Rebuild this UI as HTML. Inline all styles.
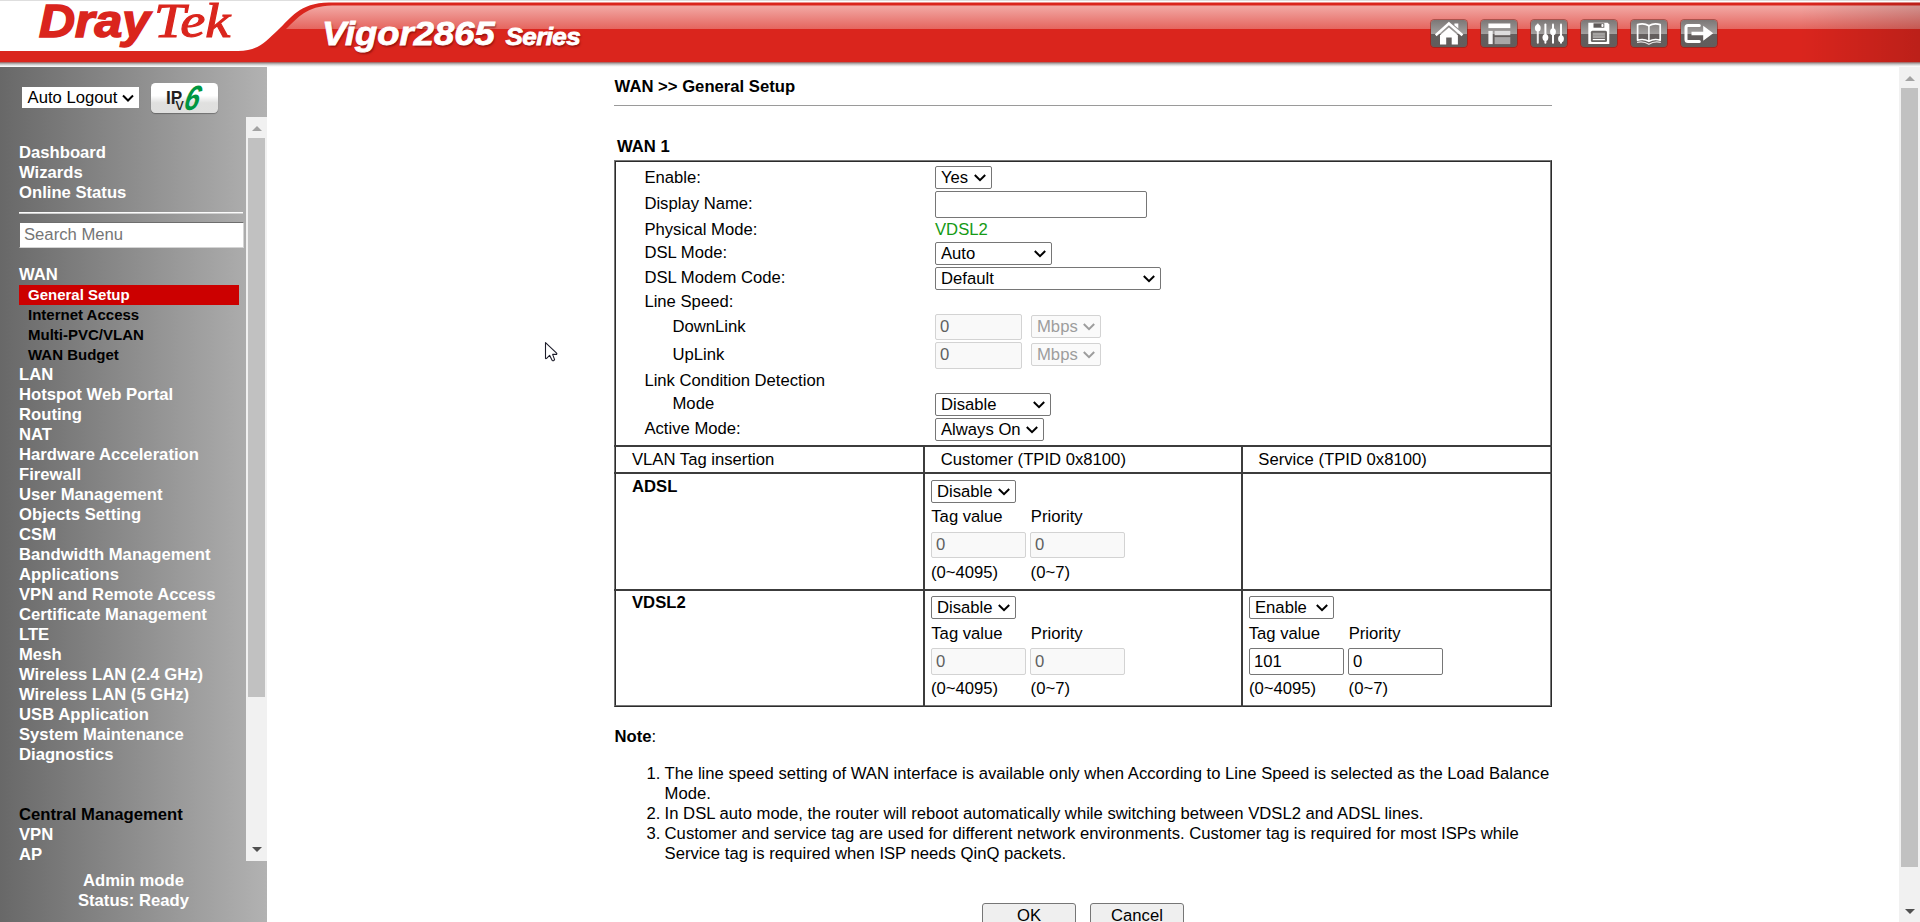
<!DOCTYPE html>
<html lang="en">
<head>
<meta charset="utf-8">
<title>Vigor2865 Series</title>
<style>
*{box-sizing:border-box}
html,body{margin:0;padding:0;width:1920px;height:922px;overflow:hidden;background:#fff;
  font-family:"Liberation Sans",Arial,sans-serif;font-size:16.67px;color:#000}
/* ---------- header ---------- */
#hdr{position:absolute;left:0;top:0;width:1920px;height:67px;overflow:hidden;background:#fff}
#hdr>svg{position:absolute;left:0;top:0}
.logo1{position:absolute;left:39px;top:-7px;font:italic bold 46px/56px "Liberation Sans",sans-serif;color:#da251d;
  transform-origin:0 0;transform:scaleX(1.085);white-space:nowrap;-webkit-text-stroke:1.600px #da251d}
.logo2{position:absolute;left:153.500px;top:-6.700px;font:italic 49px/56px "Liberation Serif",serif;color:#da251d;
  transform-origin:0 0;transform:scaleX(1.15);white-space:nowrap;-webkit-text-stroke:1.100px #da251d}
.model{position:absolute;left:322px;top:14.700px;font:italic bold 33.500px/38px "Liberation Sans",sans-serif;color:#fff;
  text-shadow:1px 2px 2px rgba(90,0,0,.55);white-space:nowrap;transform-origin:0 0;transform:scaleX(1.087);-webkit-text-stroke:.800px #fff}
.model small{font-size:24px;margin-left:10px;letter-spacing:-.600px}
.tb{position:absolute;top:20px;width:36.500px;height:26.500px;border-radius:3.500px;
  background:linear-gradient(#7b7776 0,#a29f9e 50%,#635e5d 52%,#625d5c 100%);
  box-shadow:0 0 0 1px rgba(110,35,30,.5)}
.tb svg{position:absolute;left:0;top:0}
/* ---------- sidebar ---------- */
#sb{position:absolute;left:0;top:67px;width:267px;height:855px;color:#fff;font-weight:bold}
#sbtop{position:absolute;left:0;top:0;width:267px;height:50px;background:linear-gradient(90deg,#686868,#b2b2b2)}
#sbmenu{position:absolute;left:0;top:50px;width:267px;height:744px;background:linear-gradient(90deg,#686868,#b2b2b2)}
#sbstat{position:absolute;left:0;top:794px;width:267px;height:61px;background:linear-gradient(90deg,#686868,#b2b2b2);
  text-align:center;line-height:20px;padding-top:10px}
#sb .m{position:absolute;left:19px;white-space:nowrap;line-height:20px;height:20px}
#sb .s{position:absolute;left:28px;white-space:nowrap;line-height:20px;height:20px;color:#000;font-size:15px}
#sb .k{color:#000}
#sb .sel{position:absolute;left:19px;top:218px;width:220px;height:20px;background:#cc0000;color:#fff;font-size:15px;line-height:20px;padding-left:9px}
#sb hr{position:absolute;left:19px;top:145px;width:224px;height:2px;border:0;border-top:1px solid #fbfbfb;border-bottom:1px solid #cfcfcf;margin:0}
#srch{position:absolute;left:19px;top:155px;width:225px;height:26px;background:#fff;border:1px solid #777;border-color:#6e6e6e #d4d4d4 #d4d4d4 #6e6e6e;border-radius:0;
  color:#757575;font-weight:normal;line-height:23px;padding-left:4px;font-size:16.67px}
#alog{position:absolute;left:21.600px;top:19.500px;width:117.700px;height:21.600px;background:#fff;color:#000;font-weight:normal;font-size:16.67px;line-height:22px;padding-left:6px;white-space:nowrap}
#alog svg{position:absolute;right:5px;top:7px}
#ipv6{position:absolute;left:151px;top:16px;width:67px;height:30px;border-radius:4.500px;
  background:linear-gradient(#fff 0,#fff 42%,#e0e0df 66%,#dfdfde 100%);box-shadow:0 1px 1px rgba(0,0,0,.3);color:#231f20}
#ipv6 span{position:absolute;white-space:nowrap}
.sbar{position:absolute;background:#f1f1f1}
.sbar i{position:absolute;background:#c1c1c1;display:block}
.sbar b{position:absolute;width:0;height:0;border-left:5px solid transparent;border-right:5px solid transparent;display:block}

/* ---------- main ---------- */
#main{position:absolute;left:267px;top:67px;width:1653px;height:855px;background:#fff;overflow:hidden}
#pg{position:absolute;left:-267px;top:-67px;width:1920px;height:922px}
#pg .t{position:absolute;white-space:nowrap;line-height:20px;height:20px}
#pg .b{font-weight:bold}
#pg .ln{position:absolute;background:#3c3c3c}
.sel2{position:absolute;height:23px}
.sel2 select{-webkit-appearance:none;appearance:none;display:block;width:100%;height:100%;margin:0;border:1px solid #767676;border-radius:2px;background:#fff;
  font:16.67px/20px "Liberation Sans",Arial,sans-serif;color:#000;padding:1px 0 0 5px;outline:0}
.sel2 svg{position:absolute;right:6px;top:8px;pointer-events:none}
.sel2.dis select{color:#9d9d9d;border-color:#d3d3d3;background:#fafafa;opacity:1}
.inp{position:absolute;height:26px;margin:0;border:1px solid #767676;border-radius:2px;background:#fff;
  font:16.67px/22px "Liberation Sans",Arial,sans-serif;color:#000;padding:0 0 0 4px;outline:0}
.inp.dis{color:#606060;border-color:#d3d3d3;background:#f9f9f9}
.btn{position:absolute;top:903px;height:28px;width:94px;margin:0;border:1px solid #767676;border-radius:3px;background:#efefef;
  font:16.67px/20px "Liberation Sans",Arial,sans-serif;color:#000;text-align:center;padding:2px 0 0 0}
#note{position:absolute;left:664.600px;top:763.700px;width:890px;margin:0;padding:0;list-style:none;line-height:20px}
#note li{position:relative;margin:0;padding:0}
#note li span{position:absolute;left:-18px;top:0}
</style>
</head>
<body>
<div id="hdr">
<svg width="1920" height="67" viewBox="0 0 1920 67">
 <defs>
  <linearGradient id="gl" x1="0" y1="0" x2="0" y2="1"><stop offset="0" stop-color="#f2aaa6"/><stop offset="1" stop-color="#e5655e"/></linearGradient>
  <linearGradient id="sh" x1="0" y1="0" x2="0" y2="1"><stop offset="0" stop-color="#7a1511" stop-opacity=".75"/><stop offset=".35" stop-color="#777" stop-opacity=".55"/><stop offset="1" stop-color="#bbb" stop-opacity="0"/></linearGradient>
  <linearGradient id="dk" x1="0" y1="0" x2="1" y2="0"><stop offset="0" stop-color="#000" stop-opacity="0"/><stop offset="1" stop-color="#000" stop-opacity=".14"/></linearGradient>
 </defs>
 <rect x="0" y="0" width="1920" height="1" fill="#dedede"/>
 <path d="M0,51 L238,51 C258,51 265,42 278,30 C291,18 299,3 329,2.5 L1920,2.5 L1920,62 L0,62 Z" fill="#da251d"/>
 <path d="M286,29 C298,18 306,6 332,5.5 L1920,5.5 L1920,29 Z" fill="url(#gl)"/>
 <rect x="1800" y="2.500" width="120" height="59.500" fill="url(#dk)"/>
 <rect x="0" y="62" width="1920" height="5" fill="url(#sh)"/>
</svg>
<div class="logo1">Dray</div>
<div class="logo2">Tek</div>
<div class="model">Vigor2865<small>Series</small></div>
<div class="tb" style="left:1430.500px"><svg width="37" height="27" viewBox="0 0 37 27"><path d="M17.900,1.700 L32.300,14.300 L30.600,16.200 L17.900,5.200 L5.600,16.200 L3.900,14.300 Z M23.400,3.500 H27.300 V8.500 L23.400,5.200 Z M9,15.300 L17.900,7.500 L26.900,15.300 V24.600 H20.700 V17.500 H15.200 V24.600 H9 Z" fill="#fff"/></svg></div>
<div class="tb" style="left:1480.500px"><svg width="37" height="27" viewBox="0 0 37 27"><rect x="7.400" y="3.500" width="21.900" height="4.600" fill="#fff"/><rect x="7.400" y="10.900" width="4.300" height="13.200" fill="#f4f4f4"/><rect x="13.600" y="10.900" width="15.700" height="4.300" fill="#dedddd"/><rect x="13.600" y="17.100" width="15.700" height="7" fill="#a9a7a7"/></svg></div>
<div class="tb" style="left:1530.500px"><svg width="37" height="27" viewBox="0 0 37 27"><g fill="#fff"><rect x="5.800" y="3.500" width="2" height="20.300" rx="1" opacity=".9"/><rect x="13.400" y="3.500" width="2" height="20.300" rx="1"/><rect x="21" y="3.500" width="2" height="20.300" rx="1"/><rect x="29" y="3.500" width="2" height="20.300" rx="1"/><ellipse cx="6.800" cy="8.100" rx="2.900" ry="3.500"/><ellipse cx="14.400" cy="17.500" rx="2.900" ry="3.500"/><ellipse cx="22" cy="11.700" rx="2.900" ry="3.500"/><ellipse cx="30" cy="18.700" rx="2.900" ry="3.500"/></g></svg></div>
<div class="tb" style="left:1580.500px"><svg width="37" height="27" viewBox="0 0 37 27"><path d="M7.300,2.700 H26.600 L28.300,4.400 V24 H7.300 Z" fill="#fff"/><rect x="12.500" y="3.300" width="10.800" height="4.400" fill="#5f5a59"/><rect x="20.400" y="4" width="2.100" height="3" rx=".800" fill="#fff"/><rect x="9.900" y="10.800" width="16.100" height="11.200" rx="1.500" fill="#6a6665"/><rect x="11.800" y="12.750" width="12.100" height="5.400" fill="#a5a3a2"/><rect x="11.800" y="15.200" width="12.100" height=".700" fill="#959291"/><rect x="11.800" y="19" width="12.100" height="1.200" fill="#fff"/></svg></div>
<div class="tb" style="left:1630.500px"><svg width="37" height="27" viewBox="0 0 37 27"><path d="M6.600,4.600 C10.500,3.300 14.500,3.600 17.900,5.800 C21.300,3.600 25.300,3.300 29.200,4.600 V20.200 C25.300,19 21.300,19.400 17.900,21.300 C14.500,19.400 10.500,19 6.600,20.200 Z" fill="none" stroke="#fff" stroke-width="1.700" stroke-linejoin="round"/><path d="M17.900,5.800 V21.300" stroke="#fff" stroke-width="1.500"/><path d="M6,22.300 C10.500,21.300 14.500,21.900 17.900,24.300 C21.300,21.900 25.300,21.300 29.800,22.300" fill="none" stroke="#e8e6e6" stroke-width="1.200"/></svg></div>
<div class="tb" style="left:1680.500px"><svg width="37" height="27" viewBox="0 0 37 27"><path d="M18.300,5.400 H7 Q5,5.400 5,7.400 V19.500 Q5,21.500 7,21.500 H18.300" fill="none" stroke="#fff" stroke-width="3" stroke-linecap="round"/><path d="M10.500,11.700 H22.200 V5.800 L32.200,13.300 L22.200,20.700 V15.200 H10.500 Z" fill="#fff"/></svg></div>
</div>

<div id="sb">
<div id="sbtop">
 <div id="alog">Auto Logout<svg width="12" height="8" viewBox="0 0 12 8"><path d="M1,1.500 L6,6.500 L11,1.500" fill="none" stroke="#000" stroke-width="2"/></svg></div>
 <div id="ipv6"><span style="left:15px;top:4.500px;font:bold 18.500px/20px 'Liberation Sans',sans-serif;transform:scaleX(.93);transform-origin:0 0">IP</span><span style="left:24.500px;top:13px;font:16.500px/16px 'Liberation Sans',sans-serif">v</span><span style="left:29.500px;top:-3px;font:italic bold 35px/36px 'Liberation Sans',sans-serif;color:#009640;transform:skewX(-14deg) scaleX(.76);transform-origin:0 100%">6</span></div>
</div>
<div id="sbmenu"></div>
<div id="sbstat">Admin mode<br>Status: Ready</div>
<hr>
<div id="srch">Search Menu</div>
<div class="sel">General Setup</div>
<div class="m" style="top:76px">Dashboard</div>
<div class="m" style="top:96px">Wizards</div>
<div class="m" style="top:116px">Online Status</div>
<div class="m" style="top:198px">WAN</div>
<div class="s" style="top:238px">Internet Access</div>
<div class="s" style="top:258px">Multi-PVC/VLAN</div>
<div class="s" style="top:278px">WAN Budget</div>
<div class="m" style="top:298px">LAN</div>
<div class="m" style="top:318px">Hotspot Web Portal</div>
<div class="m" style="top:338px">Routing</div>
<div class="m" style="top:358px">NAT</div>
<div class="m" style="top:378px">Hardware Acceleration</div>
<div class="m" style="top:398px">Firewall</div>
<div class="m" style="top:418px">User Management</div>
<div class="m" style="top:438px">Objects Setting</div>
<div class="m" style="top:458px">CSM</div>
<div class="m" style="top:478px">Bandwidth Management</div>
<div class="m" style="top:498px">Applications</div>
<div class="m" style="top:518px">VPN and Remote Access</div>
<div class="m" style="top:538px">Certificate Management</div>
<div class="m" style="top:558px">LTE</div>
<div class="m" style="top:578px">Mesh</div>
<div class="m" style="top:598px">Wireless LAN (2.4 GHz)</div>
<div class="m" style="top:618px">Wireless LAN (5 GHz)</div>
<div class="m" style="top:638px">USB Application</div>
<div class="m" style="top:658px">System Maintenance</div>
<div class="m" style="top:678px">Diagnostics</div>
<div class="m k" style="top:738px">Central Management</div>
<div class="m" style="top:758px">VPN</div>
<div class="m" style="top:778px">AP</div>
<div class="sbar" style="left:246px;top:50px;width:21px;height:744px"><b style="left:5.500px;top:9px;border-bottom:5px solid #a3a3a3"></b><i style="left:2px;top:21px;width:17px;height:559px"></i><b style="left:5.500px;bottom:9px;border-top:5px solid #505050"></b></div>
</div>
<div id="main"><div id="pg">
<div class="t b" style="left:614.600px;top:77px">WAN &gt;&gt; General Setup</div>
<div class="ln" style="left:614px;top:105px;width:938px;height:1px;background:#9a9a9a"></div>
<div class="t b" style="left:617px;top:137px">WAN 1</div>

<!-- table frame -->
<div class="ln" style="left:614px;top:160px;width:938px;height:547px;background:none;border:1px solid #777;border-right-color:#2b2b2b;border-bottom-color:#2b2b2b"></div>
<div class="ln" style="left:615px;top:161px;width:936px;height:545px;background:none;border:1px solid #2b2b2b;border-right-color:#777;border-bottom-color:#777"></div>
<div class="ln" style="left:614px;top:445px;width:938px;height:2px"></div>
<div class="ln" style="left:614px;top:472px;width:938px;height:2px"></div>
<div class="ln" style="left:614px;top:589px;width:938px;height:2px"></div>
<div class="ln" style="left:923px;top:445px;width:2px;height:262px"></div>
<div class="ln" style="left:1241px;top:445px;width:2px;height:262px"></div>

<div class="t" style="left:644.400px;top:168px">Enable:</div>
<span class="sel2" style="left:935px;top:166px;width:57px"><select><option>Yes</option></select><svg width="12" height="8" viewBox="0 0 12 8"><path d="M0.800,1 L6,6.200 L11.200,1" fill="none" stroke="#000" stroke-width="2"/></svg></span>
<div class="t" style="left:644.400px;top:193.7px">Display Name:</div>
<input class="inp" type="text" value="" style="left:935px;top:191px;width:212px;height:27px">
<div class="t" style="left:644.400px;top:219.8px">Physical Mode:</div>
<div class="t" style="left:935px;top:219.8px;color:#159a15">VDSL2</div>
<div class="t" style="left:644.400px;top:242.7px">DSL Mode:</div>
<span class="sel2" style="left:935px;top:242px;width:117px"><select><option>Auto</option></select><svg width="12" height="8" viewBox="0 0 12 8"><path d="M0.800,1 L6,6.200 L11.200,1" fill="none" stroke="#000" stroke-width="2"/></svg></span>
<div class="t" style="left:644.400px;top:267.7px">DSL Modem Code:</div>
<span class="sel2" style="left:935px;top:267px;width:226px"><select><option>Default</option></select><svg width="12" height="8" viewBox="0 0 12 8"><path d="M0.800,1 L6,6.200 L11.200,1" fill="none" stroke="#000" stroke-width="2"/></svg></span>
<div class="t" style="left:644.400px;top:291.9px">Line Speed:</div>
<div class="t" style="left:672.500px;top:317.2px">DownLink</div>
<input class="inp dis" type="text" value="0" disabled style="left:935px;top:314px;width:87px">
<span class="sel2 dis" style="left:1031px;top:315px;width:70px"><select disabled><option>Mbps</option></select><svg width="12" height="8" viewBox="0 0 12 8"><path d="M0.800,1 L6,6.200 L11.200,1" fill="none" stroke="#9d9d9d" stroke-width="2"/></svg></span>
<div class="t" style="left:672.500px;top:345px">UpLink</div>
<input class="inp dis" type="text" value="0" disabled style="left:935px;top:342px;width:87px;height:26.500px">
<span class="sel2 dis" style="left:1031px;top:343px;width:70px"><select disabled><option>Mbps</option></select><svg width="12" height="8" viewBox="0 0 12 8"><path d="M0.800,1 L6,6.200 L11.200,1" fill="none" stroke="#9d9d9d" stroke-width="2"/></svg></span>
<div class="t" style="left:644.400px;top:371px">Link Condition Detection</div>
<div class="t" style="left:672.500px;top:394px">Mode</div>
<span class="sel2" style="left:935px;top:393px;width:116px"><select><option>Disable</option></select><svg width="12" height="8" viewBox="0 0 12 8"><path d="M0.800,1 L6,6.200 L11.200,1" fill="none" stroke="#000" stroke-width="2"/></svg></span>
<div class="t" style="left:644.400px;top:419px">Active Mode:</div>
<span class="sel2" style="left:935px;top:418px;width:109px"><select><option>Always On</option></select><svg width="12" height="8" viewBox="0 0 12 8"><path d="M0.800,1 L6,6.200 L11.200,1" fill="none" stroke="#000" stroke-width="2"/></svg></span>

<div class="t" style="left:632px;top:449.8px">VLAN Tag insertion</div>
<div class="t" style="left:940.800px;top:449.8px">Customer (TPID 0x8100)</div>
<div class="t" style="left:1258.300px;top:449.8px">Service (TPID 0x8100)</div>

<div class="t b" style="left:632px;top:476.9px">ADSL</div>
<span class="sel2" style="left:931px;top:480px;width:85px"><select><option>Disable</option></select><svg width="12" height="8" viewBox="0 0 12 8"><path d="M0.800,1 L6,6.200 L11.200,1" fill="none" stroke="#000" stroke-width="2"/></svg></span>
<div class="t" style="left:931.300px;top:507.1px">Tag value</div>
<div class="t" style="left:1030.800px;top:507.1px">Priority</div>
<input class="inp dis" type="text" value="0" disabled style="left:931px;top:532px;width:95px">
<input class="inp dis" type="text" value="0" disabled style="left:1030px;top:532px;width:95px">
<div class="t" style="left:931px;top:562.7px">(0~4095)</div>
<div class="t" style="left:1030.600px;top:562.7px">(0~7)</div>

<div class="t b" style="left:632px;top:592.5px">VDSL2</div>
<span class="sel2" style="left:931px;top:596px;width:85px"><select><option>Disable</option></select><svg width="12" height="8" viewBox="0 0 12 8"><path d="M0.800,1 L6,6.200 L11.200,1" fill="none" stroke="#000" stroke-width="2"/></svg></span>
<div class="t" style="left:931.300px;top:624.2px">Tag value</div>
<div class="t" style="left:1030.800px;top:624.2px">Priority</div>
<input class="inp dis" type="text" value="0" disabled style="left:931px;top:648px;width:95px;height:27px">
<input class="inp dis" type="text" value="0" disabled style="left:1030px;top:648px;width:95px;height:27px">
<div class="t" style="left:931px;top:678.7px">(0~4095)</div>
<div class="t" style="left:1030.600px;top:678.7px">(0~7)</div>

<span class="sel2" style="left:1249px;top:596px;width:85px"><select><option>Enable</option></select><svg width="12" height="8" viewBox="0 0 12 8"><path d="M0.800,1 L6,6.200 L11.200,1" fill="none" stroke="#000" stroke-width="2"/></svg></span>
<div class="t" style="left:1248.700px;top:624.2px">Tag value</div>
<div class="t" style="left:1348.700px;top:624.2px">Priority</div>
<input class="inp" type="text" value="101" style="left:1249px;top:648px;width:95px;height:27px">
<input class="inp" type="text" value="0" style="left:1348px;top:648px;width:95px;height:27px">
<div class="t" style="left:1249px;top:678.7px">(0~4095)</div>
<div class="t" style="left:1348.600px;top:678.7px">(0~7)</div>

<div class="t" style="left:614.600px;top:727.2px"><b>Note</b>:</div>
<ol id="note">
<li><span>1.</span>The line speed setting of WAN interface is available only when According to Line Speed is selected as the Load Balance<br>Mode.</li>
<li><span>2.</span>In DSL auto mode, the router will reboot automatically while switching between VDSL2 and ADSL lines.</li>
<li><span>3.</span>Customer and service tag are used for different network environments. Customer tag is required for most ISPs while<br>Service tag is required when ISP needs QinQ packets.</li>
</ol>
<svg style="position:absolute;left:540px;top:338px" width="22" height="28" viewBox="540 338 22 28"><path d="M545.500,342.600 L545.500,358.300 Q545.800,359 546.600,358.300 L549.600,355.300 L552.200,360.400 Q553.600,361.500 554.600,359.600 L552.600,354.400 L556.600,354.400 Q557.200,353.700 556.600,353.100 Z" fill="#fff" stroke="#1d1d2a" stroke-width="1.100" stroke-linejoin="round"/></svg>
<div class="btn" style="left:982px">OK</div>
<div class="btn" style="left:1090px">Cancel</div>
</div>
<!-- main scrollbar -->
<div class="sbar" style="left:1632px;top:0;width:21px;height:855px"><b style="left:5.500px;top:9px;border-bottom:5px solid #a3a3a3"></b><i style="left:2px;top:21px;width:17px;height:779px"></i><b style="left:5.500px;bottom:8px;border-top:5px solid #505050"></b></div>
</div>
</body>
</html>
